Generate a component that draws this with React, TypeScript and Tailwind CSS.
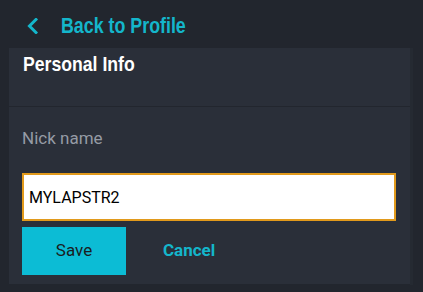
import React from "react";

export default function App() {
  return (
    <div className="w-[423px] h-[292px] overflow-hidden bg-[#22262e] flex flex-col">
      {/* Header */}
      <div className="h-[48px] pt-[4px] flex items-center pl-[26px] gap-[23px] text-[#14b6cb]">
        <svg width="12" height="16" viewBox="0 0 12 16" fill="none">
          <path d="M10 1.5 L3.5 8 L10 14.5" stroke="currentColor" strokeWidth="3" strokeLinecap="square" />
        </svg>
        <span className="inline-block origin-left scale-x-[0.81] whitespace-nowrap text-[22px] font-bold leading-[22px] font-['Liberation_Sans',sans-serif]">
          Back to Profile
        </span>
      </div>

      {/* Panel */}
      <div className="ml-[9px] w-[404px] bg-[#2a2f39] border-r-[3px] border-[#252a32] flex flex-col">
        <div className="h-[59px] border-b border-[#22262e] px-[14px] pt-[2px]">
          <h2 className="inline-block origin-left scale-x-[0.84] whitespace-nowrap text-[21px] font-bold text-white leading-[28px] font-['Liberation_Sans',sans-serif]">
            Personal Info
          </h2>
        </div>
        <div className="px-[13px] pt-[21px] font-['Roboto',sans-serif]">
          <div className="text-[17px] text-[#959ba5] leading-[20px]">Nick name</div>
          <input
            className="mt-[25px] w-[374px] h-[48px] bg-white border-2 border-[#e19a1c] px-[5px] text-[16px] text-black outline-none"
            defaultValue="MYLAPSTR2"
          />
          <div className="mt-[6px] flex items-center h-[48px]">
            <button className="w-[104px] h-[48px] bg-[#0cbcd5] text-[17px] text-[#1a1d22]">Save</button>
            <button className="ml-[37px] text-[17px] font-bold text-[#14b6cb]">Cancel</button>
          </div>
        </div>
        <div className="mt-[9px] border-b border-[#22262e]" />
      </div>
    </div>
  );
}
